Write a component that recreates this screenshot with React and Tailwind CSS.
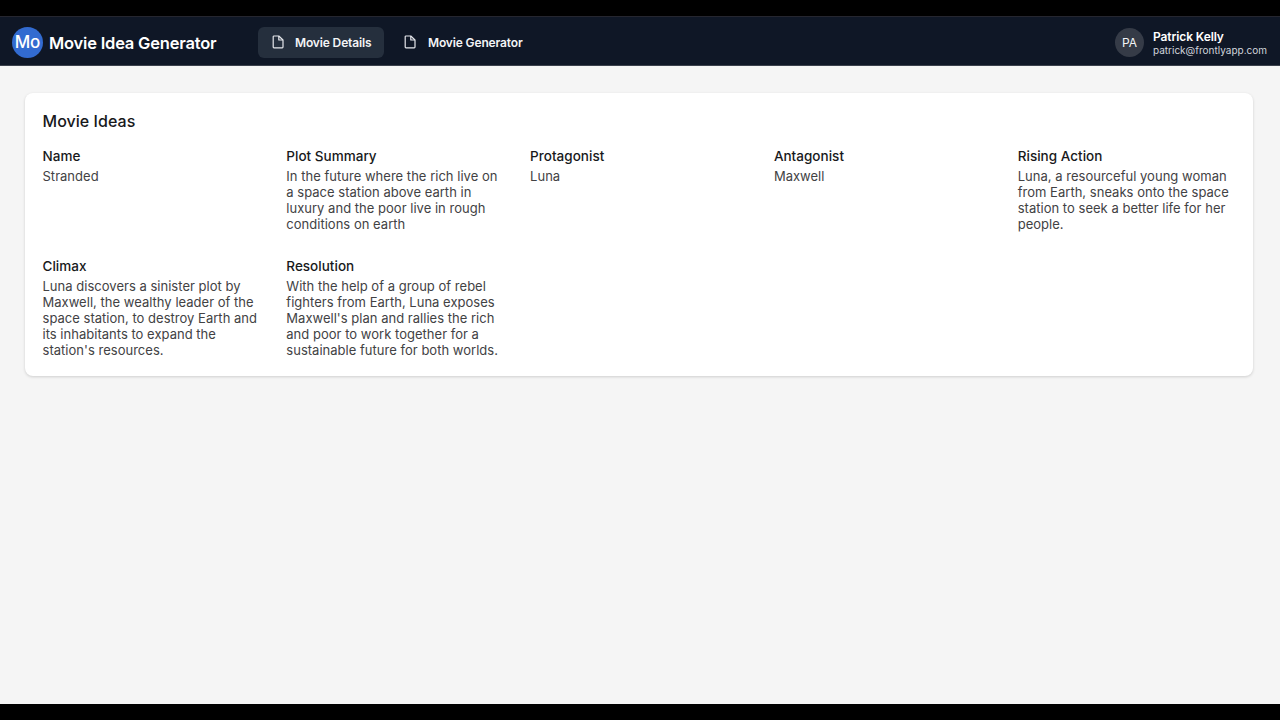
const NAV_ITEMS = [
    { label: 'Movie Details', active: true },
    { label: 'Movie Generator', active: false }
];

const FIELDS = [
    { label: 'Name', value: 'Stranded' },
    {
        label: 'Plot Summary',
        value: 'In the future where the rich live on a space station above earth in luxury and the poor live in rough conditions on earth'
    },
    { label: 'Protagonist', value: 'Luna' },
    { label: 'Antagonist', value: 'Maxwell' },
    {
        label: 'Rising Action',
        value: 'Luna, a resourceful young woman from Earth, sneaks onto the space station to seek a better life for her people.'
    },
    {
        label: 'Climax',
        value: "Luna discovers a sinister plot by Maxwell, the wealthy leader of the space station, to destroy Earth and its inhabitants to expand the station's resources."
    },
    {
        label: 'Resolution',
        value: "With the help of a group of rebel fighters from Earth, Luna exposes Maxwell's plan and rallies the rich and poor to work together for a sustainable future for both worlds."
    }
];

const PageIcon = () => (
    <svg viewBox="0 0 12 14" fill="none" stroke="currentColor" strokeWidth="1.2" strokeLinejoin="round" className="h-[14px] w-[12px] text-gray-200">
        <path d="M2 1h4.8L11 5V12a.8.8 0 0 1-.8.8H2a.8.8 0 0 1-.8-.8V1.8A.8.8 0 0 1 2 1Z" />
        <path d="M6.8 1v4H11" />
    </svg>
);

const NavItem = ({ label, active }) => (
    <a
        className={`flex h-[31px] items-center rounded-md pr-[12.5px] pl-[13.5px] text-[12px] font-semibold tracking-[-0.14px] text-gray-100 ${
            active ? 'bg-[#252f3d]' : ''
        }`}
    >
        <PageIcon />
        <span className="pt-[2px] pl-[11.5px]">{label}</span>
    </a>
);

const Header = () => (
    <header className="flex h-[50px] shrink-0 items-center border-t border-b border-t-[#25262f] border-b-[#3b414c] bg-[#0f1726] pt-[2px] pr-[13px] pl-3">
        <div className="flex w-[246px] items-center">
            <div className="flex h-[31px] w-[31px] items-center justify-center rounded-full bg-[#326bd0] pt-[2px] text-[17px] font-medium tracking-[-0.2px] text-white">
                Mo
            </div>
            <span className="ml-[6px] pt-[3px] text-[16.5px] font-semibold tracking-[-0.2px] whitespace-nowrap text-white">
                Movie Idea Generator
            </span>
        </div>
        <nav className="flex gap-[7px]">
            {NAV_ITEMS.map((item) => (
                <NavItem key={item.label} {...item} />
            ))}
        </nav>
        <div className="ml-auto flex items-center">
            <div className="flex h-[29px] w-[29px] items-center justify-center rounded-full bg-[#353b47] pt-px text-[12px] text-gray-100">
                PA
            </div>
            <div className="ml-[9px] pt-[2px]">
                <p className="text-[12px] leading-[14px] font-semibold tracking-[-0.1px] text-white">Patrick Kelly</p>
                <p className="text-[10px] leading-[12px] text-gray-300">patrick@frontlyapp.com</p>
            </div>
        </div>
    </header>
);

const App = () => (
    <div className="flex h-screen flex-col overflow-hidden bg-black py-4 font-['Inter',sans-serif]">
        <Header />
        <main className="flex-1 bg-[#f5f5f5] pt-[27px] pr-[27px] pl-[25px]">
            <section className="h-[283px] rounded-lg bg-white px-[17.5px] pt-[17px] shadow-[0_1px_3px_rgba(0,0,0,0.16)]">
                <h2 className="text-[16px] leading-[22px] font-medium tracking-[0.04px] text-[#18191b]">Movie Ideas</h2>
                <div className="mt-[15px] grid grid-cols-5 gap-x-[26px] gap-y-[25px]">
                    {FIELDS.map((field) => (
                        <div key={field.label}>
                            <h3 className="text-[13.5px] leading-[18px] font-medium tracking-[0.02px] text-[#18191b]">{field.label}</h3>
                            <p className="mt-[3px] text-[13px] leading-[16px] tracking-[0.02px] text-[#424244]">{field.value}</p>
                        </div>
                    ))}
                </div>
            </section>
        </main>
    </div>
);

export default App;
